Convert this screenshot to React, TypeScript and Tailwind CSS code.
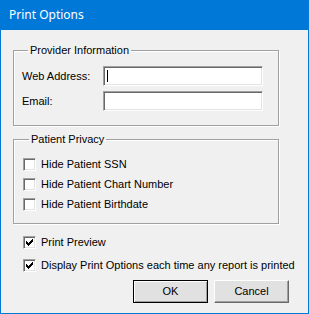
import React from "react";

const sunken =
  "border border-t-[#a0a0a0] border-l-[#a0a0a0] border-r-white border-b-white shadow-[inset_1px_1px_0_#696969,inset_-1px_-1px_0_#e3e3e3]";

function Check({ checked }: { checked?: boolean }) {
  return (
    <span className={`flex h-[13px] w-[13px] shrink-0 items-center justify-center bg-white ${sunken}`}>
      {checked && (
        <svg width="7" height="7" viewBox="0 0 7 7" shapeRendering="crispEdges" fill="#000">
          <rect x="6" y="0" width="1" height="1" />
          <rect x="5" y="1" width="2" height="1" />
          <rect x="0" y="2" width="1" height="1" />
          <rect x="4" y="2" width="3" height="1" />
          <rect x="0" y="3" width="2" height="1" />
          <rect x="3" y="3" width="3" height="1" />
          <rect x="0" y="4" width="5" height="1" />
          <rect x="1" y="5" width="3" height="1" />
          <rect x="2" y="6" width="1" height="1" />
        </svg>
      )}
    </span>
  );
}

function CheckRow({ label, checked, h = "h-[20px]" }: { label: string; checked?: boolean; h?: string }) {
  return (
    <label className={`flex ${h} items-center gap-[5px]`}>
      <Check checked={checked} />
      <span>{label}</span>
    </label>
  );
}

function Group({ title, children, className = "" }: { title: string; children: React.ReactNode; className?: string }) {
  return (
    <fieldset className={`w-[266px] border border-[#a0a0a0] shadow-[inset_1px_1px_0_#fff,1px_1px_0_#fff] ${className}`}>
      <legend className="ml-[6px] px-[2px] leading-[13px]">{title}</legend>
      {children}
    </fieldset>
  );
}

function TextField({ label, caret }: { label: string; caret?: boolean }) {
  return (
    <div className="flex h-[20px] items-center">
      <span className="w-[81px]">{label}</span>
      <div className={`relative h-[20px] w-[160px] bg-white ${sunken}`}>
        {caret && <span className="absolute left-[3px] top-[3px] h-[12px] w-px bg-black" />}
      </div>
    </div>
  );
}

export default function App() {
  return (
    <div className="flex h-[314px] w-[309px] flex-col border-x border-b border-[#0078d7] bg-[#f0f0f0] font-['Liberation_Sans',Arial,sans-serif] text-[11px] text-black">
      <div className="-mx-px flex h-[30px] shrink-0 items-center bg-[#0078d7] pl-[9px] font-['Noto_Sans',sans-serif] text-[12px] text-white">
        Print Options
      </div>
      <div className="flex flex-1 flex-col pl-[12px]">
        <Group title="Provider Information" className="mt-[14px] pb-[14px] pl-[8px]">
          <div className="mt-[9px] flex flex-col gap-[5px]">
            <TextField label="Web Address:" caret />
            <TextField label="Email:" />
          </div>
        </Group>
        <Group title="Patient Privacy" className="mt-[7px] pb-[9px] pl-[9px]">
          <div className="mt-[8px] flex flex-col">
            <CheckRow label="Hide Patient SSN" />
            <CheckRow label="Hide Patient Chart Number" />
            <CheckRow label="Hide Patient Birthdate" />
          </div>
        </Group>
        <div className="mt-[7px] flex flex-col pl-[10px]">
          <CheckRow label="Print Preview" checked h="h-[23px]" />
          <CheckRow label="Display Print Options each time any report is printed" checked h="h-[23px]" />
        </div>
        <div className="mt-[3px] flex gap-[6px] pl-[120px]">
          <button className="h-[23px] w-[75px] border border-black bg-[#e1e1e1] shadow-[inset_1px_1px_0_#fff,inset_-1px_-1px_0_#a0a0a0]">
            OK
          </button>
          <button className="h-[23px] w-[75px] border border-t-white border-l-white border-r-[#696969] border-b-[#696969] bg-[#e1e1e1] shadow-[inset_-1px_-1px_0_#a0a0a0]">
            Cancel
          </button>
        </div>
      </div>
    </div>
  );
}
